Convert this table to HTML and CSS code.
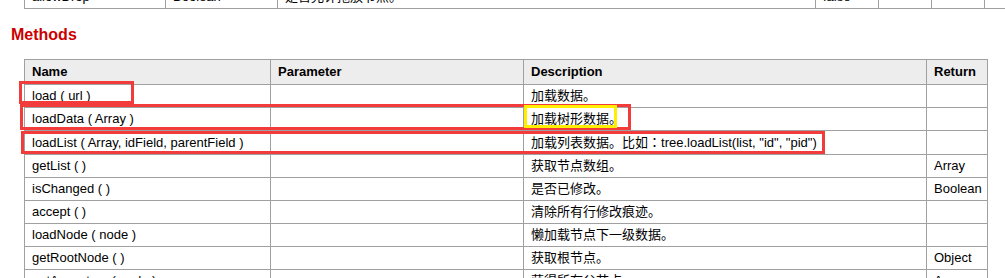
FILE: index.html
```html
<!DOCTYPE html>
<html lang="zh-CN">
<head>
<meta charset="utf-8">
<title>Methods</title>
<link rel="stylesheet" href="styles.css">
</head>
<body>
<div class="page">
  <table class="props">
    <colgroup>
      <col class="p1"><col class="p2"><col class="p3"><col class="p4"><col class="p5"><col class="p6"><col class="p7">
    </colgroup>
    <tr>
      <td>allowDrop</td><td>Boolean</td><td>是否允许拖放节点。</td><td>false</td><td></td><td></td><td></td>
    </tr>
  </table>

  <h3 class="section-title">Methods</h3>

  <table class="methods">
    <colgroup>
      <col class="c-name"><col class="c-param"><col class="c-desc"><col class="c-ret">
    </colgroup>
    <thead>
      <tr><th>Name</th><th>Parameter</th><th>Description</th><th>Return</th></tr>
    </thead>
    <tbody>
      <tr><td>load ( url )</td><td></td><td>加载数据。</td><td></td></tr>
      <tr><td>loadData ( Array )</td><td></td><td>加载树形数据。</td><td></td></tr>
      <tr><td>loadList ( Array, idField, parentField )</td><td></td><td>加载列表数据。比如<span class="fw" lang="ja">：</span>tree.loadList(list, "id", "pid")</td><td></td></tr>
      <tr><td>getList ( )</td><td></td><td>获取节点数组。</td><td>Array</td></tr>
      <tr><td>isChanged ( )</td><td></td><td>是否已修改。</td><td>Boolean</td></tr>
      <tr><td>accept ( )</td><td></td><td>清除所有行修改痕迹。</td><td></td></tr>
      <tr><td>loadNode ( node )</td><td></td><td>懒加载节点下一级数据。</td><td></td></tr>
      <tr><td>getRootNode ( )</td><td></td><td>获取根节点。</td><td>Object</td></tr>
      <tr><td>getAncestors ( node )</td><td></td><td>获得所有父节点。</td><td>Array</td></tr>
    </tbody>
  </table>

  <div class="mark mark-red mark-1"></div>
  <div class="mark mark-red mark-2"></div>
  <div class="mark mark-yellow mark-3"></div>
  <div class="mark mark-red mark-4"></div>
</div>
</body>
</html>
```

FILE: styles.css
```css
html, body {
  margin: 0;
  padding: 0;
  background: #ffffff;
  overflow: hidden;
}

body {
  font-family: "Liberation Sans", Arial, "Noto Sans CJK SC", sans-serif;
  font-size: 13px;
  color: #000000;
}

.page {
  position: relative;
  width: 1005px;
  height: 278px;
  overflow: hidden;
}

table {
  border-collapse: collapse;
  table-layout: fixed;
}

td, th {
  border: 1px solid #a0a0a0;
  padding: 0 7px;
  text-align: left;
  white-space: nowrap;
  overflow: hidden;
  font-family: "Liberation Sans", Arial, "Noto Sans CJK SC", sans-serif;
}

.fw {
  font-family: "Noto Sans CJK JP", "Noto Sans CJK SC", sans-serif;
}

/* previous (properties) table, only its last row's bottom is visible */
.props {
  margin: -14px 0 0 24px;
  width: 1010px;
}
.props td {
  height: 22px;
  line-height: 22px;
  border-top: none;
}
.p1 { width: 141px; }
.p2 { width: 112px; }
.p3 { width: 538px; }
.p4 { width: 63px; }
.p5 { width: 53px; }
.p6 { width: 53px; }
.p7 { width: 50px; }

.section-title {
  margin: 16px 0 14px 11px;
  font-size: 16px;
  line-height: 20px;
  font-weight: bold;
  color: #cc0000;
}

.methods {
  margin-left: 24px;
  width: 964px;
}
.c-name { width: 246px; }
.c-param { width: 253px; }
.c-desc { width: 403px; }
.c-ret { width: 61px; }

.methods th {
  background: #ededed;
  font-weight: bold;
  height: 24px;
  line-height: 24px;
}
.methods td {
  height: 22px;
  line-height: 22px;
}

.mark {
  position: absolute;
  box-sizing: border-box;
  border: 3px solid #f03a3a;
}
.mark-red { border-color: #f23b3b; }
.mark-yellow { border-color: #ffee00; }

.mark-1 { left: 19px; top: 81px; width: 115px; height: 23px; }
.mark-2 { left: 20px; top: 104px; width: 611px; height: 26px; }
.mark-3 { left: 524px; top: 105px; width: 93px; height: 23px; }
.mark-4 { left: 21px; top: 131px; width: 804px; height: 23px; }
```
